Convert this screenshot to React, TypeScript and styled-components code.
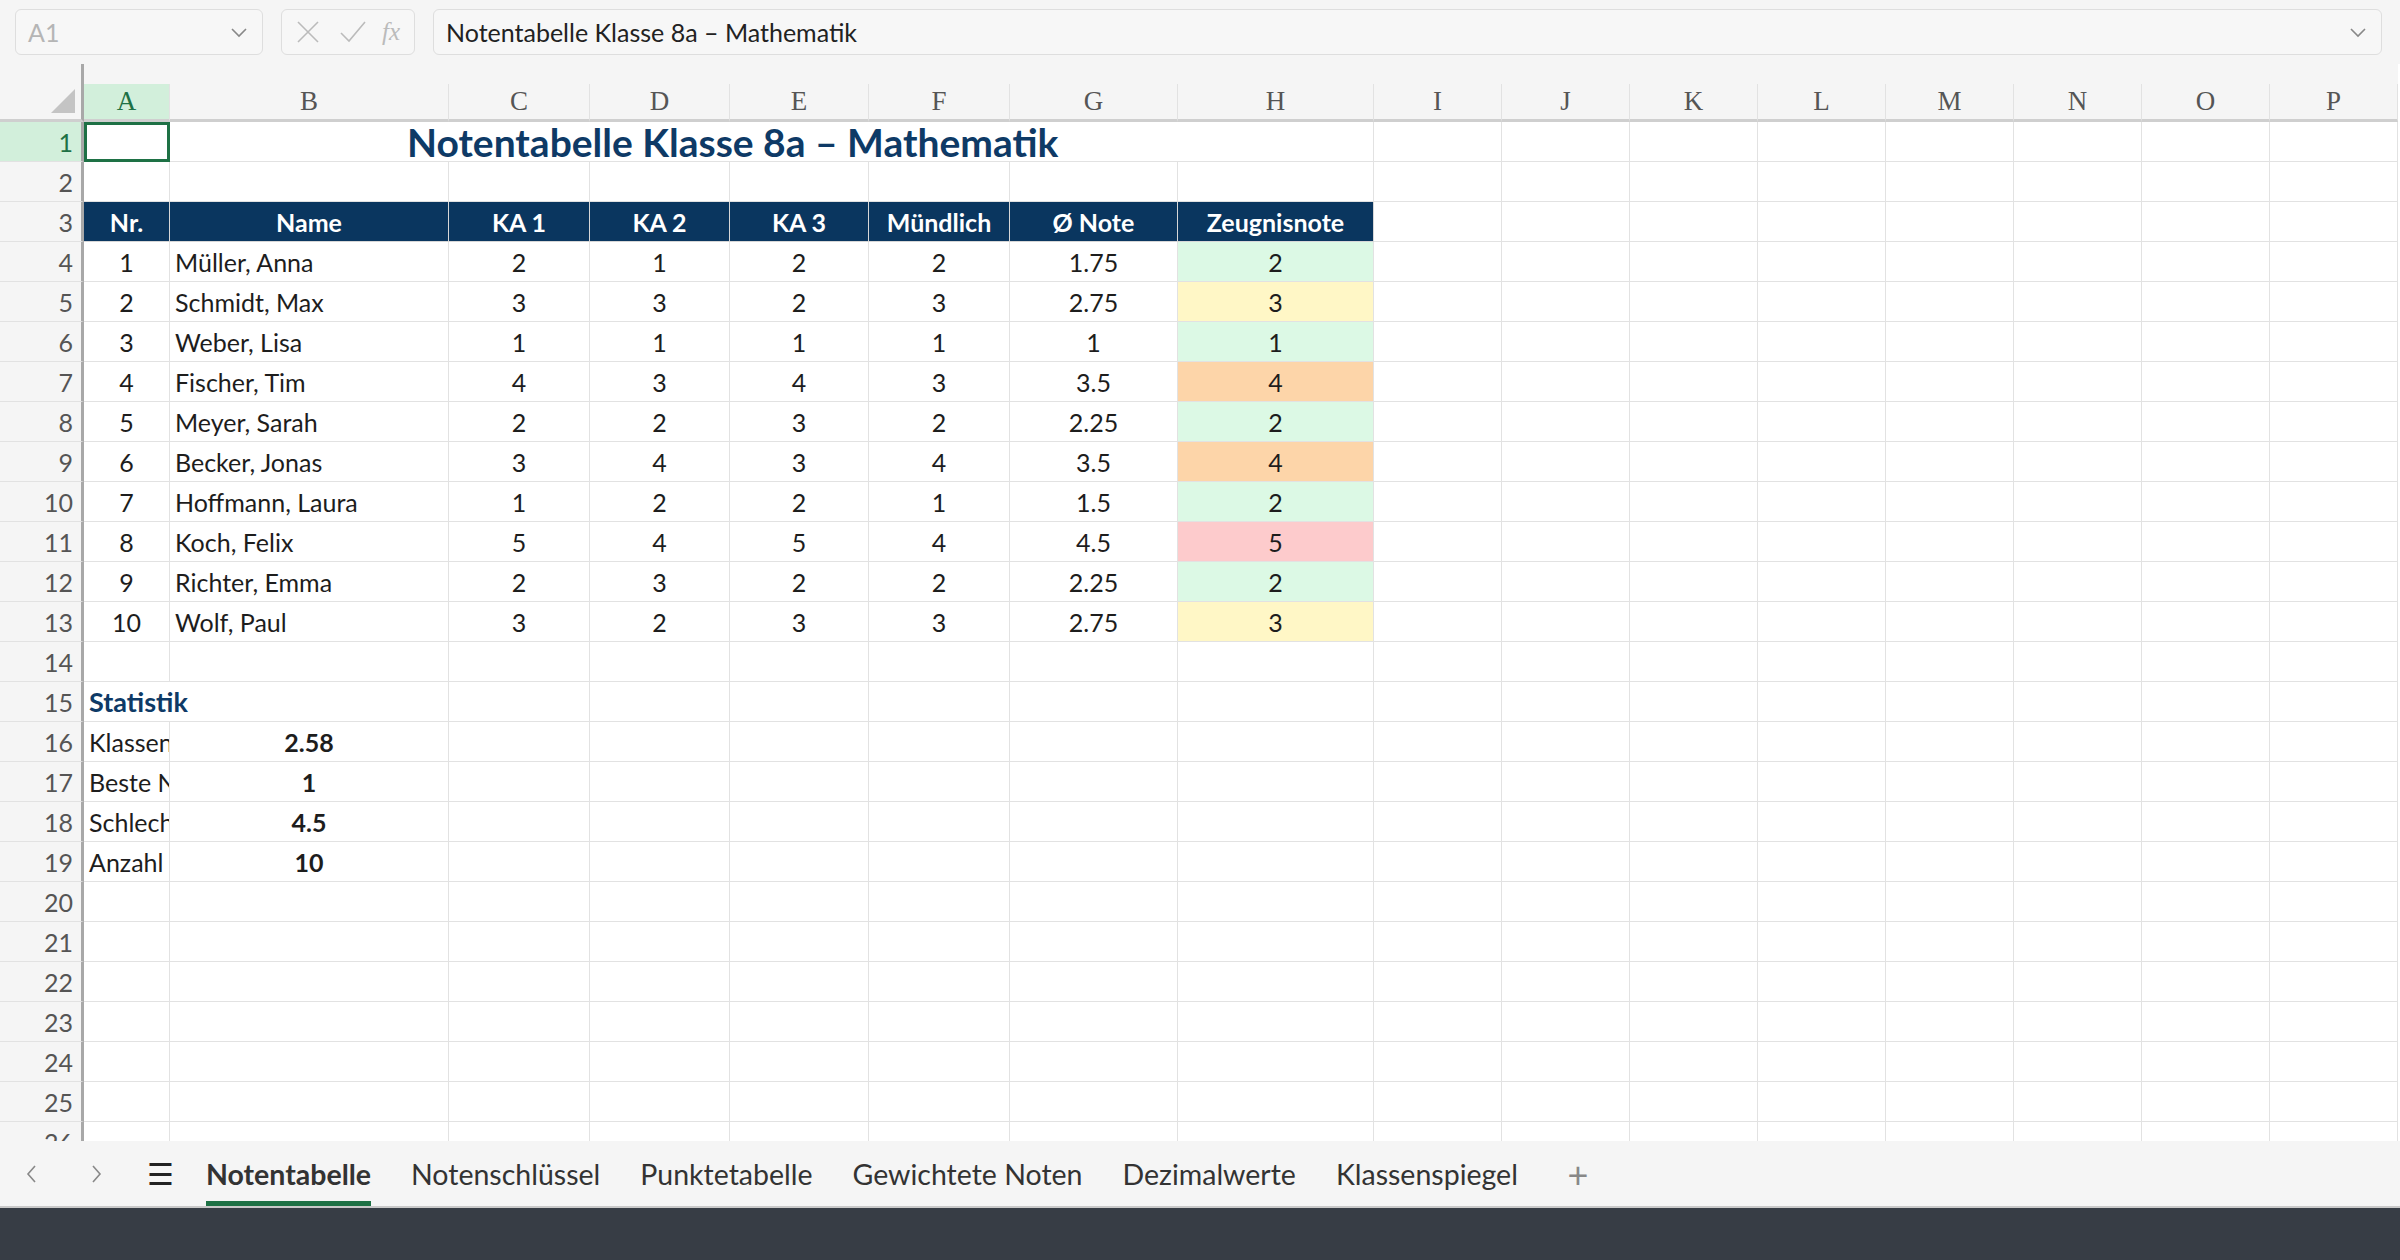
import React from 'react'
import styled, { createGlobalStyle } from 'styled-components'

const GlobalStyle = createGlobalStyle`
  html, body { margin: 0; padding: 0; background: #f5f5f5; }
  body { font-family: Lato, 'Noto Sans', sans-serif; }
`

const colWidths = [84, 86, 279, 141, 140, 139, 141, 168, 196, 128, 128, 128, 128, 128, 128, 128, 128]
const letters = 'ABCDEFGHIJKLMNOP'.split('')

const students = [
  ['1', 'Müller, Anna', '2', '1', '2', '2', '1.75', '2'],
  ['2', 'Schmidt, Max', '3', '3', '2', '3', '2.75', '3'],
  ['3', 'Weber, Lisa', '1', '1', '1', '1', '1', '1'],
  ['4', 'Fischer, Tim', '4', '3', '4', '3', '3.5', '4'],
  ['5', 'Meyer, Sarah', '2', '2', '3', '2', '2.25', '2'],
  ['6', 'Becker, Jonas', '3', '4', '3', '4', '3.5', '4'],
  ['7', 'Hoffmann, Laura', '1', '2', '2', '1', '1.5', '2'],
  ['8', 'Koch, Felix', '5', '4', '5', '4', '4.5', '5'],
  ['9', 'Richter, Emma', '2', '3', '2', '2', '2.25', '2'],
  ['10', 'Wolf, Paul', '3', '2', '3', '3', '2.75', '3'],
]

const gradeColor: Record<string, string> = {
  '1': '#dcf9e5',
  '2': '#dcf9e5',
  '3': '#fff7c6',
  '4': '#fdd5a9',
  '5': '#fdcbcc',
}

const stats = [
  ['Klassendurchschnitt', '2.58'],
  ['Beste Note', '1'],
  ['Schlechteste Note', '4.5'],
  ['Anzahl', '10'],
]

const Page = styled.div`
  width: 2400px;
  height: 1260px;
  display: flex;
  flex-direction: column;
  overflow: hidden;
`

const FormulaBar = styled.div`
  height: 64px;
  display: flex;
  align-items: center;
  gap: 18px;
  padding: 0 18px 0 15px;
  box-sizing: border-box;
`

const Box = styled.div<{ $w?: number; $grow?: boolean }>`
  height: 46px;
  box-sizing: border-box;
  border: 1.5px solid #dedede;
  border-radius: 6px;
  background: #f7f7f7;
  display: flex;
  align-items: center;
  padding: 0 12px;
  gap: 14px;
  width: ${p => (p.$w ? `${p.$w}px` : 'auto')};
  flex: ${p => (p.$grow ? 1 : 'none')};
  font-size: 25px;
  color: #222;
`

const Muted = styled.span`
  color: #b5b5b5;
  flex: 1;
`

const Sheet = styled.div`
  flex: 1;
  display: grid;
  grid-template-columns: ${colWidths.map(w => `${w}px`).join(' ')};
  grid-template-rows: 20px 38px;
  grid-auto-rows: 40px;
  overflow: hidden;
  background: #fff;
`

const Spacer = styled.div`
  grid-column: 1 / -1;
  background: #f5f5f5;
  display: grid;
  grid-template-columns: 84px 1fr;
`

const SpacerLeft = styled.div`
  border-right: 3px solid #a8a8a8;
`

const ColHead = styled.div<{ $active?: boolean }>`
  background: ${p => (p.$active ? '#d2efdb' : '#f5f5f5')};
  color: ${p => (p.$active ? '#1e7145' : '#555')};
  font-family: 'Liberation Serif', serif;
  font-size: 27px;
  display: flex;
  align-items: center;
  justify-content: center;
  border-right: 1px solid #e2e2e2;
  border-bottom: 3px solid #cfcfcf;
  box-sizing: border-box;
`

const Corner = styled.div`
  background: #f5f5f5;
  border-right: 3px solid #a8a8a8;
  border-bottom: 3px solid #cfcfcf;
  box-sizing: border-box;
  position: relative;
`

const Tri = styled.div`
  position: absolute;
  right: 6px;
  bottom: 6px;
  width: 0;
  height: 0;
  border-left: 24px solid transparent;
  border-bottom: 24px solid #c4c4c4;
`

const RowHead = styled.div<{ $active?: boolean }>`
  background: ${p => (p.$active ? '#d2efdb' : '#f5f5f5')};
  color: ${p => (p.$active ? '#1e7145' : '#555')};
  font-size: 25px;
  display: flex;
  align-items: center;
  justify-content: flex-end;
  padding-right: 8px;
  border-right: 3px solid #a8a8a8;
  border-bottom: 1px solid #e2e2e2;
  box-sizing: border-box;
`

const Cell = styled.div<{
  $align?: 'left' | 'center'
  $bg?: string
  $head?: boolean
  $bold?: boolean
  $span?: number
  $selected?: boolean
}>`
  grid-column: ${p => (p.$span ? `span ${p.$span}` : 'auto')};
  background: ${p => p.$bg || (p.$head ? '#0a365f' : '#fff')};
  color: ${p => (p.$head ? '#fff' : '#1d1d1d')};
  font-weight: ${p => (p.$bold || p.$head ? 700 : 400)};
  font-size: 25px;
  display: flex;
  align-items: center;
  justify-content: ${p => (p.$align === 'left' ? 'flex-start' : 'center')};
  padding: 0 5px;
  white-space: nowrap;
  overflow: hidden;
  box-sizing: border-box;
  border-right: 1px solid ${p => (p.$head ? '#d7d7d7' : '#e2e2e2')};
  border-bottom: 1px solid ${p => (p.$head ? '#d7d7d7' : '#e2e2e2')};
  ${p => (p.$selected ? 'outline: 3px solid #1e7145; outline-offset: -3px;' : '')}
`

const Title = styled(Cell)`
  color: #0e3a66;
  font-size: 39px;
  padding-left: 237px;
  overflow: visible;
`

const Section = styled(Cell)`
  color: #0e3a66;
  font-size: 27px;
`

const TabBar = styled.div`
  height: 65px;
  background: #f5f5f5;
  display: flex;
  align-items: stretch;
  padding-left: 0;
  font-size: 28.5px;
  color: #333;
`

const NavBtn = styled.div`
  width: 64px;
  display: flex;
  align-items: center;
  justify-content: center;
  color: #888;
`

const Tab = styled.div<{ $active?: boolean }>`
  display: flex;
  align-items: center;
  margin-right: 40px;
  font-weight: ${p => (p.$active ? 700 : 400)};
  border-bottom: 5px solid ${p => (p.$active ? '#1e7145' : 'transparent')};
  border-top: 5px solid transparent;
`

const Footer = styled.div`
  height: 52px;
  background: #373d45;
  border-top: 2px solid #c9c9c9;
`

const Chevron = ({ dir }: { dir: 'l' | 'r' | 'd' }) => (
  <svg width="22" height="22" viewBox="0 0 22 22" fill="none" stroke="#888" strokeWidth="1.6">
    {dir === 'l' && <path d="M14 3 L7 11 L14 19" />}
    {dir === 'r' && <path d="M8 3 L15 11 L8 19" />}
    {dir === 'd' && <path d="M4 8 L11 15 L18 8" />}
  </svg>
)

export default function App() {
  const rows: React.ReactNode[] = []

  rows.push(
    <React.Fragment key="r1">
      <RowHead $active>1</RowHead>
      <Cell $selected />
      <Title $align="left" $bold $span={7}>Notentabelle Klasse 8a – Mathematik</Title>
      {letters.slice(8).map(l => <Cell key={l} />)}
    </React.Fragment>,
  )
  rows.push(
    <React.Fragment key="r2">
      <RowHead>2</RowHead>
      {letters.map(l => <Cell key={l} />)}
    </React.Fragment>,
  )
  const heads = ['Nr.', 'Name', 'KA 1', 'KA 2', 'KA 3', 'Mündlich', 'Ø Note', 'Zeugnisnote']
  rows.push(
    <React.Fragment key="r3">
      <RowHead>3</RowHead>
      {heads.map(h => <Cell key={h} $head>{h}</Cell>)}
      {letters.slice(8).map(l => <Cell key={l} />)}
    </React.Fragment>,
  )
  students.forEach((s, i) => {
    rows.push(
      <React.Fragment key={`s${i}`}>
        <RowHead>{i + 4}</RowHead>
        {s.map((v, j) => (
          <Cell key={j} $align={j === 1 ? 'left' : 'center'} $bg={j === 7 ? gradeColor[v] : undefined}>
            {v}
          </Cell>
        ))}
        {letters.slice(8).map(l => <Cell key={l} />)}
      </React.Fragment>,
    )
  })
  rows.push(
    <React.Fragment key="r14">
      <RowHead>14</RowHead>
      {letters.map(l => <Cell key={l} />)}
    </React.Fragment>,
  )
  rows.push(
    <React.Fragment key="r15">
      <RowHead>15</RowHead>
      <Section $align="left" $bold $span={2}>Statistik</Section>
      {letters.slice(2).map(l => <Cell key={l} />)}
    </React.Fragment>,
  )
  stats.forEach((s, i) => {
    rows.push(
      <React.Fragment key={`st${i}`}>
        <RowHead>{i + 16}</RowHead>
        <Cell $align="left">{s[0]}</Cell>
        <Cell $bold>{s[1]}</Cell>
        {letters.slice(2).map(l => <Cell key={l} />)}
      </React.Fragment>,
    )
  })
  for (let r = 20; r <= 26; r++) {
    rows.push(
      <React.Fragment key={`e${r}`}>
        <RowHead>{r}</RowHead>
        {letters.map(l => <Cell key={l} />)}
      </React.Fragment>,
    )
  }

  return (
    <Page>
      <GlobalStyle />
      <FormulaBar>
        <Box $w={248}>
          <Muted>A1</Muted>
          <Chevron dir="d" />
        </Box>
        <Box $w={134}>
          <svg width="30" height="26" viewBox="0 0 30 26" fill="none" stroke="#bbb" strokeWidth="1.6">
            <path d="M4 3 L24 23 M24 3 L4 23" />
          </svg>
          <svg width="30" height="26" viewBox="0 0 30 26" fill="none" stroke="#bbb" strokeWidth="1.6">
            <path d="M3 14 L11 22 L27 3" />
          </svg>
          <span style={{ color: '#bbb', fontFamily: 'Liberation Serif, serif', fontStyle: 'italic' }}>fx</span>
        </Box>
        <Box $grow>
          <span style={{ flex: 1 }}>Notentabelle Klasse 8a – Mathematik</span>
          <Chevron dir="d" />
        </Box>
      </FormulaBar>
      <Sheet>
        <Spacer>
          <SpacerLeft />
          <div />
        </Spacer>
        <Corner>
          <Tri />
        </Corner>
        {letters.map((l, i) => (
          <ColHead key={l} $active={i === 0}>{l}</ColHead>
        ))}
        {rows}
      </Sheet>
      <TabBar>
        <NavBtn><Chevron dir="l" /></NavBtn>
        <NavBtn><Chevron dir="r" /></NavBtn>
        <NavBtn style={{ color: '#222', fontSize: 30, marginRight: 14 }}>☰</NavBtn>
        <Tab $active>Notentabelle</Tab>
        <Tab>Notenschlüssel</Tab>
        <Tab>Punktetabelle</Tab>
        <Tab>Gewichtete Noten</Tab>
        <Tab>Dezimalwerte</Tab>
        <Tab>Klassenspiegel</Tab>
        <NavBtn style={{ fontSize: 36, width: 40 }}>+</NavBtn>
      </TabBar>
      <Footer />
    </Page>
  )
}
